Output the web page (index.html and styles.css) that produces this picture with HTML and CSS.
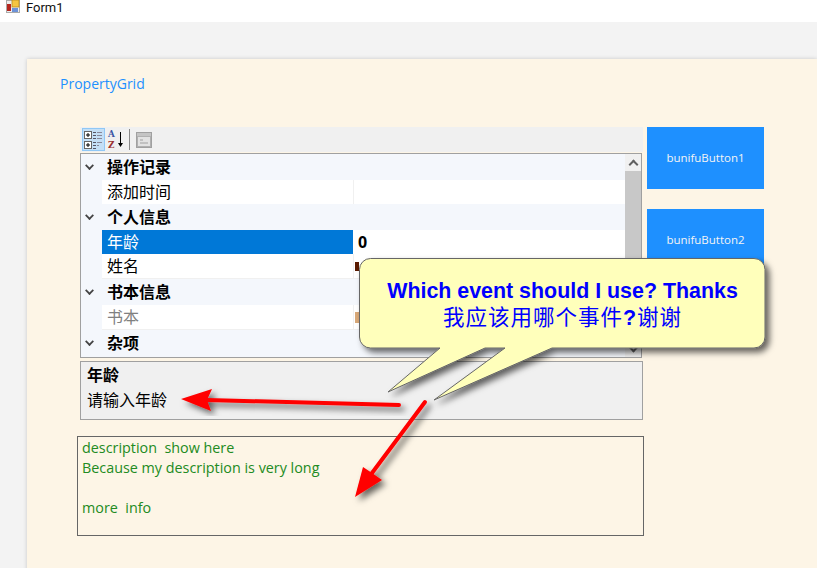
FILE: index.html
```html
<!DOCTYPE html>
<html lang="en">
<head>
    <meta charset="UTF-8">
    <title>Form1</title>
    <link rel="stylesheet" href="styles.css">
</head>
<body>
    <div class="titlebar">
        <svg class="app-icon" width="14" height="13" viewBox="0 0 14 13">
            <rect x="0.500" y="0.500" width="13" height="12" fill="#eee" stroke="#aaa"/>
            <rect x="6" y="0" width="7" height="7" fill="#f5c542" stroke="#b98a1e" stroke-width="0.800"/>
            <rect x="1" y="4" width="4" height="7" fill="#b5261e"/>
            <rect x="6" y="8" width="6" height="4" fill="#6d93d8"/>
        </svg>
        <span>Form1</span>
    </div>

    <div class="desktop">
        <div class="form">
            <div class="form-title">PropertyGrid</div>

            <div class="top-row">
                <div class="grid-col">
                    <div class="toolbar">
                        <div class="tool tool-active">
                            <svg width="21" height="20" viewBox="0 0 21 20">
                                <rect x="1.500" y="1.500" width="7" height="7" fill="#fff" stroke="#666"/>
                                <rect x="1.500" y="11.500" width="7" height="7" fill="#fff" stroke="#666"/>
                                <path d="M3 5h4M5 3v4M3 15h4M5 13v4" stroke="#000"/>
                                <path d="M10 2.500h3M10 5.500h3M10 8.500h3M10 12.500h3M10 15.500h3M10 18.500h3" stroke="#556" stroke-width="1"/>
                                <path d="M14 2.500h5M14 5.500h5M14 8.500h5M14 12.500h5M14 15.500h2" stroke="#889" stroke-width="1"/>
                            </svg>
                        </div>
                        <div class="tool tool-sort">
                            <span class="az"><span class="az-a">A</span><span class="az-z">Z</span></span>
                            <svg width="7" height="18" viewBox="0 0 7 18">
                                <path d="M3.500 1v12" stroke="#000"/>
                                <path d="M1 12h5l-2.500 4z" fill="#000"/>
                            </svg>
                        </div>
                        <div class="tool-sep"></div>
                        <div class="tool">
                            <svg width="16" height="16" viewBox="0 0 16 16">
                                <rect x="0.500" y="0.500" width="15" height="15" fill="#c4c4c4" stroke="#a0a0a0"/>
                                <rect x="1.500" y="4.500" width="13" height="10" fill="#e2e2e2" stroke="#b0b0b0"/>
                                <path d="M4 8h3M4 11h8" stroke="#a0a0a0"/>
                            </svg>
                        </div>
                    </div>

                    <div class="grid">
                        <div class="rows">
                            <div class="row group"><span class="chevron"></span><span>操作记录</span></div>
                            <div class="row prop short"><span class="name">添加时间</span><span class="value"></span></div>
                            <div class="row group"><span class="chevron"></span><span>个人信息</span></div>
                            <div class="row prop short"><span class="name selected">年龄</span><span class="value strong">0</span></div>
                            <div class="row prop"><span class="name">姓名</span><span class="value"><span class="value-mark dark"></span></span></div>
                            <div class="row group"><span class="chevron"></span><span>书本信息</span></div>
                            <div class="row prop"><span class="name muted">书本</span><span class="value"><span class="value-mark tan"></span></span></div>
                            <div class="row group"><span class="chevron"></span><span>杂项</span></div>
                        </div>
                        <div class="scrollbar">
                            <div class="scroll-btn up"></div>
                            <div class="scroll-thumb"></div>
                            <div class="scroll-btn down"></div>
                        </div>
                    </div>

                    <div class="help">
                        <div class="help-title">年龄</div>
                        <div class="help-text">请输入年龄</div>
                    </div>
                </div>

                <div class="buttons">
                    <div class="btn">bunifuButton1</div>
                    <div class="btn">bunifuButton2</div>
                </div>
            </div>

            <div class="description">
                <div>description&nbsp; show here</div>
                <div>Because my description is very long</div>
                <div>&nbsp;</div>
                <div>more&nbsp; info</div>
            </div>
        </div>
    </div>

    <!-- callout and arrows drawn over the form -->
    <svg class="overlay" width="817" height="568" viewBox="0 0 817 568">
        <defs>
            <filter id="shadow" x="-20%" y="-20%" width="140%" height="140%">
                <feDropShadow dx="4" dy="4" stdDeviation="3" flood-color="#000" flood-opacity="0.6"/>
            </filter>
        </defs>
        <g filter="url(#shadow)">
            <path d="M370.500 258.500H754a11 11 0 0 1 11 11V337a11 11 0 0 1 -11 11H552L434 400L505 348H485L388 392L440 348H370.500a11 11 0 0 1 -11 -11V269.500a11 11 0 0 1 11 -11z" fill="#ffffbb" stroke="#666" stroke-width="1"/>
        </g>
        <g filter="url(#shadow)">
            <path d="M399 405L207 400" stroke="#f00" stroke-width="4" stroke-linecap="round"/>
            <path d="M181 399L212 389L207 400L211 411z" fill="#f00"/>
        </g>
        <g filter="url(#shadow)">
            <path d="M425 402L372 473" stroke="#f00" stroke-width="4" stroke-linecap="round"/>
            <path d="M355 497L363 467L372 473L382 480z" fill="#f00"/>
        </g>
    </svg>
    <div class="callout">
        <div class="callout-en">Which event should I use? Thanks</div>
        <div class="callout-cn">我应该用哪个事件<span class="callout-mark">?</span>谢谢</div>
    </div>
</body>
</html>
```

FILE: styles.css
```css
* {
    box-sizing: border-box;
}

html, body {
    margin: 0;
    height: 568px;
    overflow: hidden;
}

body {
    font-family: "Open Sans", "Noto Sans CJK SC", sans-serif;
    background-color: #f3f3f3;
    position: relative;
}

.titlebar {
    height: 22px;
    background: white;
    display: flex;
    align-items: flex-start;
    font-family: Roboto, sans-serif;
    font-size: 13px;
    color: #111;
    padding-left: 6px;
    gap: 6px;
}

.titlebar span {
    line-height: 15px;
}

.desktop {
    padding: 37px 0 0 27px;
}

.form {
    background-color: #fdf5e6;
    height: 520px;
    padding: 15px 0 0 33px;
    box-shadow: 0 0 4px rgba(0, 0, 0, 0.18);
}

.form-title {
    color: #1e90ff;
    font-size: 14px;
    line-height: 20px;
}

.top-row {
    display: flex;
    margin-top: 33px;
    margin-left: 20px;
}

.grid-col {
    width: 563px;
}

.toolbar {
    height: 25px;
    background-color: #f0f0f0;
    display: flex;
    align-items: center;
    padding-left: 2px;
    margin-bottom: 1px;
}

.tool {
    height: 23px;
    display: flex;
    align-items: center;
    justify-content: center;
}

.tool-active {
    width: 23px;
    background-color: #c4dff6;
    border: 1px solid #90c8f6;
}

.tool-sort {
    margin-left: 3px;
    gap: 2px;
}

.tool-sep {
    width: 1px;
    height: 21px;
    background-color: #888;
    margin: 0 6px 0 5px;
}

.az {
    display: flex;
    flex-direction: column;
    font-family: "DejaVu Serif", serif;
    font-weight: bold;
    font-size: 8.800px;
    line-height: 10.300px;
}

.az-a {
    color: #3a55a5;
}

.az-z {
    color: #9a3030;
}

.grid {
    height: 205px;
    border: 1px solid #a0a0a0;
    display: flex;
    background-color: white;
    margin-right: 1px;
}

.rows {
    flex: 1;
    background-color: #f4f7fc;
}

.row {
    height: 25px;
    display: flex;
    align-items: center;
    font-size: 16px;
    color: #000;
}

.group {
    height: 26px;
    font-weight: bold;
    padding: 0 0 2px 5px;
    gap: 10px;
}

.chevron {
    width: 7px;
    height: 7px;
    margin: 0 4px 1px 0;
    border-right: 2px solid #444;
    border-bottom: 2px solid #444;
    transform: rotate(45deg) scale(0.9);
}

.prop {
    margin-left: 21px;
    background-color: white;
    border-bottom: 1px solid #f0f0f0;
}

.short {
    height: 24px;
    border-bottom: none;
}

.name {
    width: 252px;
    height: 24px;
    line-height: 24px;
    padding-left: 5px;
    border-right: 1px solid #f0f0f0;
}

.selected {
    background-color: #0078d7;
    color: white;
    border-right: 1px solid white;
}

.muted {
    color: #808080;
}

.value {
    padding-left: 1px;
    flex: 1;
    display: flex;
    align-items: center;
}

.strong {
    padding-left: 4px;
    font-weight: bold;
}

/* start of a value that the callout covers */
.value-mark {
    width: 4px;
    height: 9px;
}

.dark {
    background-color: #5a1a00;
}

.tan {
    background-color: #d8a878;
    height: 11px;
}

.scrollbar {
    width: 16px;
    background-color: #f0f0f0;
    display: flex;
    flex-direction: column;
}

.scroll-btn {
    height: 17px;
    position: relative;
}

.scroll-btn::after {
    content: "";
    position: absolute;
    left: 5px;
    top: 7px;
    width: 5px;
    height: 5px;
    border-left: 2px solid #606060;
    border-top: 2px solid #606060;
    transform: rotate(45deg);
}

.scroll-btn.down::after {
    top: 4px;
    transform: rotate(225deg);
}

.scroll-thumb {
    flex: 1;
    background-color: #c8c8c8;
}

.help {
    height: 59px;
    margin-top: 3px;
    border: 1px solid #a0a0a0;
    background-color: #f0f0f0;
    padding: 1px 6px;
    font-size: 16px;
    color: #000;
}

.help-title {
    font-weight: bold;
    line-height: 24px;
}

.help-text {
    line-height: 26px;
}

.buttons {
    display: flex;
    flex-direction: column;
    gap: 20px;
    margin-left: 4px;
}

.btn {
    width: 117px;
    height: 62px;
    background-color: #1e90ff;
    color: #f4f4f4;
    font-size: 11.500px;
    padding-bottom: 2px;
    display: flex;
    align-items: center;
    justify-content: center;
}

.description {
    width: 567px;
    height: 100px;
    margin-top: 16px;
    margin-left: 17px;
    border: 1px solid #666;
    padding: 1px 4px;
    color: #228b22;
    font-size: 14.350px;
    line-height: 20px;
}

.overlay {
    position: absolute;
    left: 0;
    top: 0;
}

.callout {
    position: absolute;
    left: 359px;
    top: 277px;
    width: 407px;
    color: #0000ff;
    text-align: center;
}

.callout-en {
    font-family: "Liberation Sans", sans-serif;
    font-weight: bold;
    font-size: 21.400px;
    line-height: 28px;
}

.callout-cn {
    font-family: "Noto Sans CJK SC", sans-serif;
    font-size: 21.500px;
    letter-spacing: 1px;
    line-height: 22px;
}

.callout-mark {
    font-family: "Liberation Sans", sans-serif;
    font-weight: bold;
}
```
